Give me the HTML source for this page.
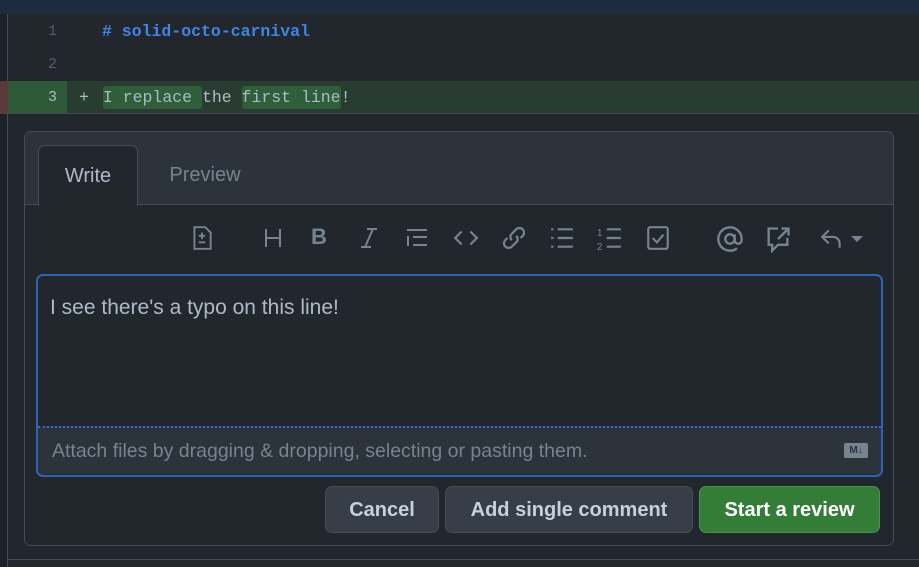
<!DOCTYPE html>
<html><head><style>
*{box-sizing:border-box;margin:0;padding:0}
body{width:919px;height:567px;background:#22272e;font-family:"Liberation Sans",sans-serif;position:relative;overflow:hidden}
.top{position:absolute;left:0;top:0;width:919px;height:14px;background:#1d2a40}
.lstrip{position:absolute;left:0;top:14px;width:8px;height:553px;background:#1c2128;border-right:1px solid #444c56}
.row{position:absolute;left:8px;width:911px;height:33px;font-family:"Liberation Mono",monospace;font-size:16.5px}
.num{position:absolute;left:0;width:59px;height:100%;text-align:right;padding-right:10px;line-height:33px;color:#545d68;font-size:15px}
.code{position:absolute;left:59px;right:0;height:100%;line-height:33px;color:#adbac7;padding-left:35px}
.hl{background:#2e5e3a;border-radius:3px;padding:2px 0}
.box{position:absolute;left:24px;top:131px;width:870px;height:415px;border:1px solid #444c56;border-radius:7px;overflow:hidden}
.hdr{position:absolute;left:0;top:0;width:100%;height:73px;background:#2d333b;border-bottom:1px solid #444c56}
.tab{position:absolute;top:13px;height:61px;font-size:20px;line-height:61px;text-align:center}
.tb svg{position:absolute;top:93px}
.ta{position:absolute;left:11px;top:142px;width:847px;height:203px;border:2px solid #2f63b8;border-radius:7px;overflow:hidden;background:#22272e}
.btn{position:absolute;top:354px;height:47px;border-radius:7px;font-size:20px;font-weight:bold;line-height:47px;text-align:center;color:#c5d1de;background:#373e47;border:1px solid #444c56}
</style></head><body>
<div class="top"></div>
<div class="lstrip"></div>
<div class="row" style="top:15px"><div class="num">1</div><div class="code" style="color:#4184e4;font-weight:bold"># solid-octo-carnival</div></div>
<div class="row" style="top:48px"><div class="num">2</div><div class="code"></div></div>
<div class="row" style="top:81px;border-bottom:1px solid #444c56"><div class="num" style="background:#2f5a3a;color:#adbac7">3</div><div class="code" style="background:#283c31;padding-left:12px">+<span style="display:inline-block;width:14px"></span><span class="hl">I replace </span>the <span class="hl">first line</span>!</div></div>
<div style="position:absolute;left:0;top:81px;width:8px;height:33px;background:#5a3a3a"></div>
<div class="box">
 <div class="hdr"></div>
 <div class="tab" style="left:13px;width:100px;background:#22272e;border:1px solid #444c56;border-bottom:none;border-radius:7px 7px 0 0;color:#adbac7">Write</div>
 <div class="tab" style="left:130px;width:100px;color:#768390">Preview</div>
 <div class="tb" style="color:#768390">
  <svg style="left:164px" width="26" height="26" viewBox="0 0 24 24" fill="none" stroke="#768390" stroke-width="1.8"><path d="M5 2h10l5 5v15H5z"/><path d="M12 7v6M9 10h6M9 16h6"/></svg>
  <svg style="left:236px" width="24" height="26" viewBox="0 0 24 24" fill="none" stroke="#768390" stroke-width="2"><path d="M5 3v18M19 3v18M5 12h14"/></svg>
  <div style="position:absolute;left:286px;top:92px;font-size:22px;font-weight:bold;color:#768390">B</div>
  <svg style="left:332px" width="24" height="26" viewBox="0 0 24 24" fill="none" stroke="#768390" stroke-width="2"><path d="M10 3h10M4 21h10M16 3L8 21"/></svg>
  <svg style="left:380px" width="24" height="26" viewBox="0 0 24 24" fill="none" stroke="#768390" stroke-width="2"><path d="M2 4h20M8 11h14M8 19h14M3 10v10"/></svg>
  <svg style="left:428px" width="26" height="26" viewBox="0 0 24 24" fill="none" stroke="#768390" stroke-width="2"><path d="M8 6l-6 6 6 6M16 6l6 6-6 6"/></svg>
  <svg style="left:476px" width="26" height="26" viewBox="0 0 24 24" fill="none" stroke="#768390" stroke-width="2"><path d="M10 14a4 4 0 0 1 0-6l4-4a4 4 0 0 1 6 6l-2 2M14 10a4 4 0 0 1 0 6l-4 4a4 4 0 0 1-6-6l2-2"/></svg>
  <svg style="left:524px" width="26" height="26" viewBox="0 0 24 24" fill="none" stroke="#768390" stroke-width="2"><path d="M8 4h14M8 12h14M8 20h14M2 4h2M2 12h2M2 20h2"/></svg>
  <svg style="left:572px" width="26" height="26" viewBox="0 0 24 24" fill="none" stroke="#768390" stroke-width="2"><path d="M9 4h13M9 12h13M9 20h13"/><text x="0" y="10" font-size="9" fill="#768390" stroke="none">1</text><text x="0" y="23" font-size="9" fill="#768390" stroke="none">2</text></svg>
  <svg style="left:620px" width="26" height="26" viewBox="0 0 24 24" fill="none" stroke="#768390" stroke-width="2"><rect x="3" y="2" width="18" height="20" rx="2"/><path d="M7 12l4 4 6-7"/></svg>
  <svg style="left:691px" width="28" height="28" viewBox="0 0 24 24" fill="none" stroke="#768390" stroke-width="2"><circle cx="12" cy="12" r="4"/><path d="M16 8v5a3 3 0 0 0 6 0v-1a10 10 0 1 0-4 8"/></svg>
  <svg style="left:739px" width="28" height="28" viewBox="0 0 24 24" fill="none" stroke="#768390" stroke-width="2"><path d="M12 3H4v14h3v5l5-5h8v-6M15 3h6v6M21 3l-9 9"/></svg>
  <svg style="left:794px" width="26" height="26" viewBox="0 0 24 24" fill="none" stroke="#768390" stroke-width="2"><path d="M9 5L3 11l6 6M3 11h10a6 6 0 0 1 6 6v4"/></svg>
  <div style="position:absolute;left:826px;top:104px;border-left:6px solid transparent;border-right:6px solid transparent;border-top:6px solid #768390"></div>
 </div>
 <div class="ta">
  <div style="position:absolute;left:12px;top:20px;font-size:21px;color:#adbac7">I see there's a typo on this line!</div>
  <div style="position:absolute;left:0;top:150px;width:100%;height:48px;background:#2d333b;border-top:2px dotted #316dca"></div>
  <div style="position:absolute;left:14px;top:164px;font-size:19.5px;color:#768390">Attach files by dragging &amp; dropping, selecting or pasting them.</div>
  <div style="position:absolute;right:13px;top:167px;width:24px;height:15px;background:#768390;border-radius:2px;font-size:10px;font-weight:bold;color:#2d333b;text-align:center;line-height:15px">M↓</div>
 </div>
 <div class="btn" style="left:300px;width:114px">Cancel</div>
 <div class="btn" style="left:420px;width:248px">Add single comment</div>
 <div class="btn" style="left:674px;width:181px;background:#347d39;border-color:#46954a;color:#fff">Start a review</div>
</div>
<div style="position:absolute;left:8px;top:559px;width:911px;border-top:1px solid #444c56"></div>
</body></html>
